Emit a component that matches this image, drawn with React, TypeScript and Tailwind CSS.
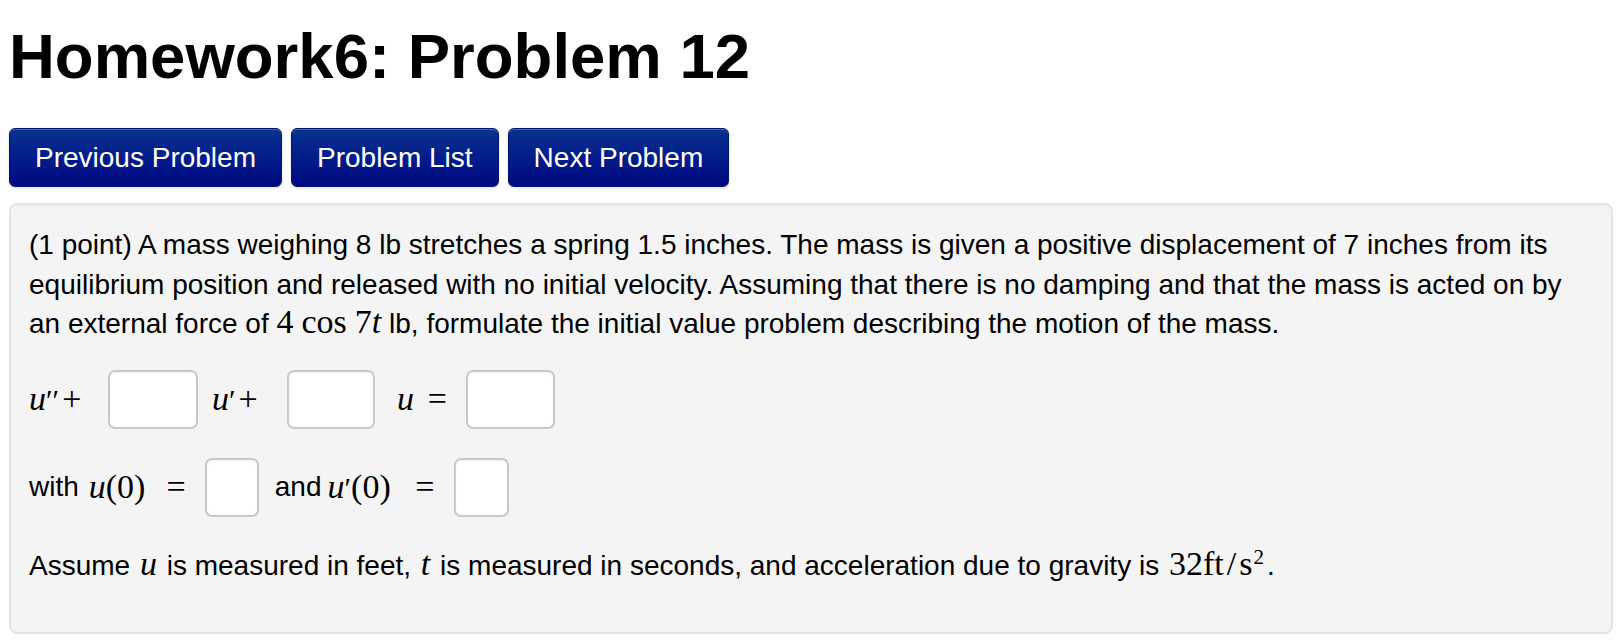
import React from 'react';

// serif stack used for the typeset math bits
const math = "font-['Liberation_Serif','Times_New_Roman',serif] text-[34px]";
const inlineMath = "font-['Liberation_Serif','Times_New_Roman',serif] text-[34px] leading-none";

function AnswerBlank({ className }: { className: string }) {
  return (
    <input
      type="text"
      aria-label="answer"
      className={
        className +
        ' h-[59px] shrink-0 rounded-[7px] border-2 border-[#c9c9c9] bg-white shadow-[inset_0_1px_2px_rgba(0,0,0,0.06)] outline-none'
      }
    />
  );
}

function NavButton({ label }: { label: string }) {
  return (
    <button
      type="button"
      className="h-[59px] rounded-[6px] border border-[#00176e] bg-[linear-gradient(to_bottom,#07328f,#000883)] px-[25px] text-[28px] leading-[39px] text-white shadow-[inset_0_1px_0_rgba(255,255,255,0.25),0_1px_3px_rgba(0,0,0,0.15)]"
    >
      {label}
    </button>
  );
}

export default function App() {
  return (
    <div className="min-h-screen bg-white pl-[9px] pr-[8px] font-['Liberation_Sans',Arial,sans-serif] text-black">
      <h1 className="mt-[21px] text-[63.5px] font-bold leading-[70px]">Homework6: Problem 12</h1>

      <div className="mt-[37px] flex gap-[9px]">
        <NavButton label="Previous Problem" />
        <NavButton label="Problem List" />
        <NavButton label="Next Problem" />
      </div>

      <div className="mt-[16px] rounded-[8px] border-2 border-[#e4e4e4] bg-[#f4f4f4] pt-[20px] pb-[47px] pl-[18px] pr-[18px] text-[28px] leading-[39.5px] shadow-[inset_0_1px_1px_rgba(0,0,0,0.04)]">
        <p>
          (1 point) A mass weighing 8 lb stretches a spring 1.5 inches. The mass is given a positive
          displacement of 7 inches from its
          <br />
          equilibrium position and released with no initial velocity. Assuming that there is no damping
          and that the mass is acted on by
          <br />
          an external force of{' '}
          <span className={inlineMath}>
            4<span className="ml-[8px]">cos</span>
            <span className="ml-[8px]">7</span>
            <i>t</i>
          </span>{' '}
          lb, formulate the initial value problem describing the motion of the mass.
        </p>

        <div className="mt-[26px] flex h-[59px] items-center">
          <span className={'w-[59px] whitespace-nowrap ' + math}>
            <i>u</i>
            <span className="text-[30px]">′′</span>
            <span className="ml-[3px]">+</span>
          </span>
          <AnswerBlank className="ml-[20px] w-[90px]" />
          <span className={'ml-[14px] w-[55px] whitespace-nowrap ' + math}>
            <i>u</i>
            <span className="text-[30px]">′</span>
            <span className="ml-[3px]">+</span>
          </span>
          <AnswerBlank className="ml-[20px] w-[88px]" />
          <span className={'ml-[22px] flex w-[50px] justify-between ' + math}>
            <i>u</i>
            <span>=</span>
          </span>
          <AnswerBlank className="ml-[19px] w-[89px]" />
        </div>

        <div className="mt-[29px] flex h-[59px] items-center">
          <span>with</span>
          <span className={'ml-[10px] flex w-[97px] justify-between ' + math}>
            <span>
              <i>u</i>(0)
            </span>
            <span>=</span>
          </span>
          <AnswerBlank className="ml-[19px] w-[54px]" />
          <span className="ml-[16px]">and</span>
          <span className={'ml-[6px] flex w-[107px] justify-between ' + math}>
            <span>
              <i>u</i>
              <span className="text-[30px]">′</span>(0)
            </span>
            <span>=</span>
          </span>
          <AnswerBlank className="ml-[19px] w-[55px]" />
        </div>

        <p className="mt-[29px]">
          Assume <i className={'mx-[2px] ' + inlineMath}>u</i> is measured in feet,{' '}
          <i className={'mx-[2px] ' + inlineMath}>t</i> is measured in seconds, and acceleration due to
          gravity is{' '}
          <span className={'ml-[2px] ' + inlineMath}>
            32ft<span className="mx-[3px]">/</span>s<sup className="ml-[1px] text-[21px]">2</sup>
          </span>
          <span className="ml-[3px]">.</span>
        </p>
      </div>
    </div>
  );
}
